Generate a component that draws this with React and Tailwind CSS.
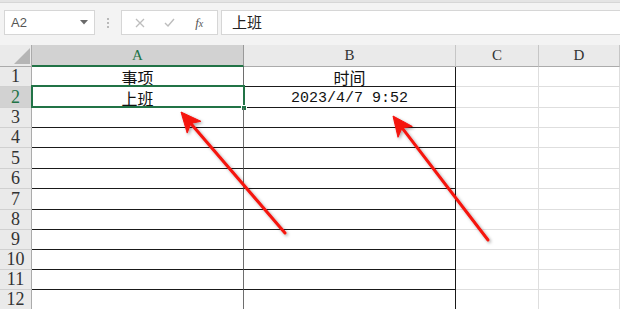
import React from "react";

const rowHeights = [20, 21, 20, 20, 21, 20, 21, 20, 20, 20, 20, 20];

function RowHeader({ n, selected }) {
  return (
    <div
      className={
        "w-[32px] shrink-0 flex items-end justify-center border-r border-b border-r-[#ababab] border-b-[#d0d0d0] " +
        (selected ? "bg-[#d2d2d2] text-[#217346]" : "bg-[#eaeaea] text-[#333]")
      }
      style={{ fontFamily: '"Liberation Serif", serif' }}
    >
      <span className="text-[18px] leading-[19px]">{n}</span>
    </div>
  );
}

function Row({ n, h, a, b, selected }) {
  return (
    <div className="flex shrink-0" style={{ height: h }}>
      <RowHeader n={n} selected={selected} />
      <div className="relative w-[212px] shrink-0 border-r border-b border-r-[#6e6e6e] border-b-[#1a1a1a] flex items-end justify-center">
        {a && (
          <span
            className="text-[16px] leading-[17px] text-[#111]"
            style={{ fontFamily: '"Noto Sans CJK SC", sans-serif' }}
          >
            {a}
          </span>
        )}
        {selected && (
          <>
            <div className="absolute left-[-1px] top-[-2px] right-[-2px] bottom-[-1px] border-2 border-[#217346]" />
            <div className="absolute right-[-4px] bottom-[-4px] w-[6px] h-[6px] bg-[#217346] border border-white" />
          </>
        )}
      </div>
      <div className="w-[212px] shrink-0 border-r border-b border-r-[#1a1a1a] border-b-[#1a1a1a] flex items-end justify-center">
        {b && (
          <span
            className={b.mono ? "text-[15px] leading-[17px] text-[#111]" : "text-[16px] leading-[17px] text-[#111]"}
            style={{
              fontFamily: b.mono
                ? '"Liberation Mono", monospace'
                : '"Noto Sans CJK SC", sans-serif',
            }}
          >
            {b.t}
          </span>
        )}
      </div>
      <div className="w-[83px] shrink-0 border-r border-b border-[#dedede]" />
      <div className="w-[81px] shrink-0 border-r border-b border-[#dedede]" />
    </div>
  );
}

export default function App() {
  const data = {
    1: { a: "事项", b: { t: "时间" } },
    2: { a: "上班", b: { t: "2023/4/7 9:52", mono: true } },
  };
  return (
    <div
      className="relative w-[620px] h-[309px] overflow-hidden bg-white flex flex-col"
      style={{ fontFamily: '"Liberation Sans", "Noto Sans CJK SC", sans-serif' }}
    >
      {/* toolbar */}
      <div className="h-[45px] shrink-0 bg-[#f3f3f3] flex flex-col">
        <div className="h-[3px] bg-[#e4e4e4] border-b border-[#d6d6d6]" />
        <div className="flex items-start pt-[7px] pl-[4px]">
          <div className="w-[91px] h-[25px] bg-white border border-[#d6d6d6] flex items-center justify-between pl-[6px] pr-[6px]">
            <span className="text-[13px] text-[#555]">A2</span>
            <svg width="8" height="5" viewBox="0 0 8 5">
              <path d="M0 0 L8 0 L4 4.5 Z" fill="#6a6a6a" />
            </svg>
          </div>
          <div className="w-[26px] h-[25px] flex flex-col items-center justify-center gap-[2px]">
            <div className="w-[2px] h-[2px] bg-[#b9b9b9]" />
            <div className="w-[2px] h-[2px] bg-[#b9b9b9]" />
            <div className="w-[2px] h-[2px] bg-[#b9b9b9]" />
          </div>
          <div className="w-[97px] h-[25px] bg-white border border-[#d6d6d6] flex items-center">
            <div className="w-[36px] flex justify-center">
              <svg width="10" height="10" viewBox="0 0 10 10">
                <path d="M1 1 L9 9 M9 1 L1 9" stroke="#bdbdbd" strokeWidth="1.3" />
              </svg>
            </div>
            <div className="w-[24px] flex justify-center">
              <svg width="11" height="9" viewBox="0 0 11 9">
                <path d="M1 5 L4 8 L10 1" stroke="#bdbdbd" strokeWidth="1.4" fill="none" />
              </svg>
            </div>
            <div className="w-[36px] flex justify-center">
              <span
                className="italic text-[13px] text-[#555]"
                style={{ fontFamily: '"Liberation Serif", serif' }}
              >
                f<span className="text-[10px]">x</span>
              </span>
            </div>
          </div>
          <div className="ml-[3px] flex-1 h-[25px] bg-white border-l border-y border-[#d6d6d6] flex items-center pl-[10px]">
            <span
              className="text-[15px] text-[#222]"
              style={{ fontFamily: '"Noto Sans CJK SC", sans-serif' }}
            >
              上班
            </span>
          </div>
        </div>
      </div>

      {/* column header */}
      <div
        className="flex h-[22px] shrink-0 text-[15px] text-[#333]"
        style={{ fontFamily: '"Liberation Serif", serif' }}
      >
        <div className="w-[32px] shrink-0 bg-[#eaeaea] border-r border-b border-[#ababab] flex items-end justify-end pr-[1px] pb-[2px]">
          <svg width="16" height="16" viewBox="0 0 16 16">
            <path d="M16 0 L16 16 L0 16 Z" fill="#b5b5b5" />
          </svg>
        </div>
        <div className="w-[212px] shrink-0 bg-[#d2d2d2] border-r border-r-[#9a9a9a] border-b-2 border-b-[#217346] flex items-center justify-center text-[#217346]">
          A
        </div>
        <div className="w-[212px] shrink-0 bg-[#eaeaea] border-r border-b border-r-[#c6c6c6] border-b-[#ababab] flex items-center justify-center">
          B
        </div>
        <div className="w-[83px] shrink-0 bg-[#eaeaea] border-r border-b border-r-[#c6c6c6] border-b-[#ababab] flex items-center justify-center">
          C
        </div>
        <div className="w-[81px] shrink-0 bg-[#eaeaea] border-r border-b border-r-[#c6c6c6] border-b-[#ababab] flex items-center justify-center">
          D
        </div>
      </div>

      {rowHeights.map((h, i) => {
        const n = i + 1;
        const d = data[n] || {};
        return <Row key={n} n={n} h={h} a={d.a} b={d.b} selected={n === 2} />;
      })}

      {/* annotation arrows */}
      <svg
        className="absolute left-0 top-0 pointer-events-none"
        width="620"
        height="309"
        viewBox="0 0 620 309"
      >
        <defs>
          <filter id="sh" x="-20%" y="-20%" width="140%" height="140%">
            <feDropShadow dx="1.5" dy="1.5" stdDeviation="1.5" floodColor="#000" floodOpacity="0.35" />
          </filter>
        </defs>
        <g filter="url(#sh)" fill="#f5130f" stroke="#f5130f">
          <line x1="285" y1="233" x2="190.8" y2="123.4" strokeWidth="3" strokeLinecap="round" />
          <polygon points="181,112 200.9,121.3 190.8,123.4 187.2,133.1" strokeWidth="1" strokeLinejoin="round" />
          <line x1="488" y1="240" x2="402.1" y2="127.9" strokeWidth="3" strokeLinecap="round" />
          <polygon points="393,116 412.3,126.4 402.1,127.9 398,137.3" strokeWidth="1" strokeLinejoin="round" />
        </g>
      </svg>
    </div>
  );
}
